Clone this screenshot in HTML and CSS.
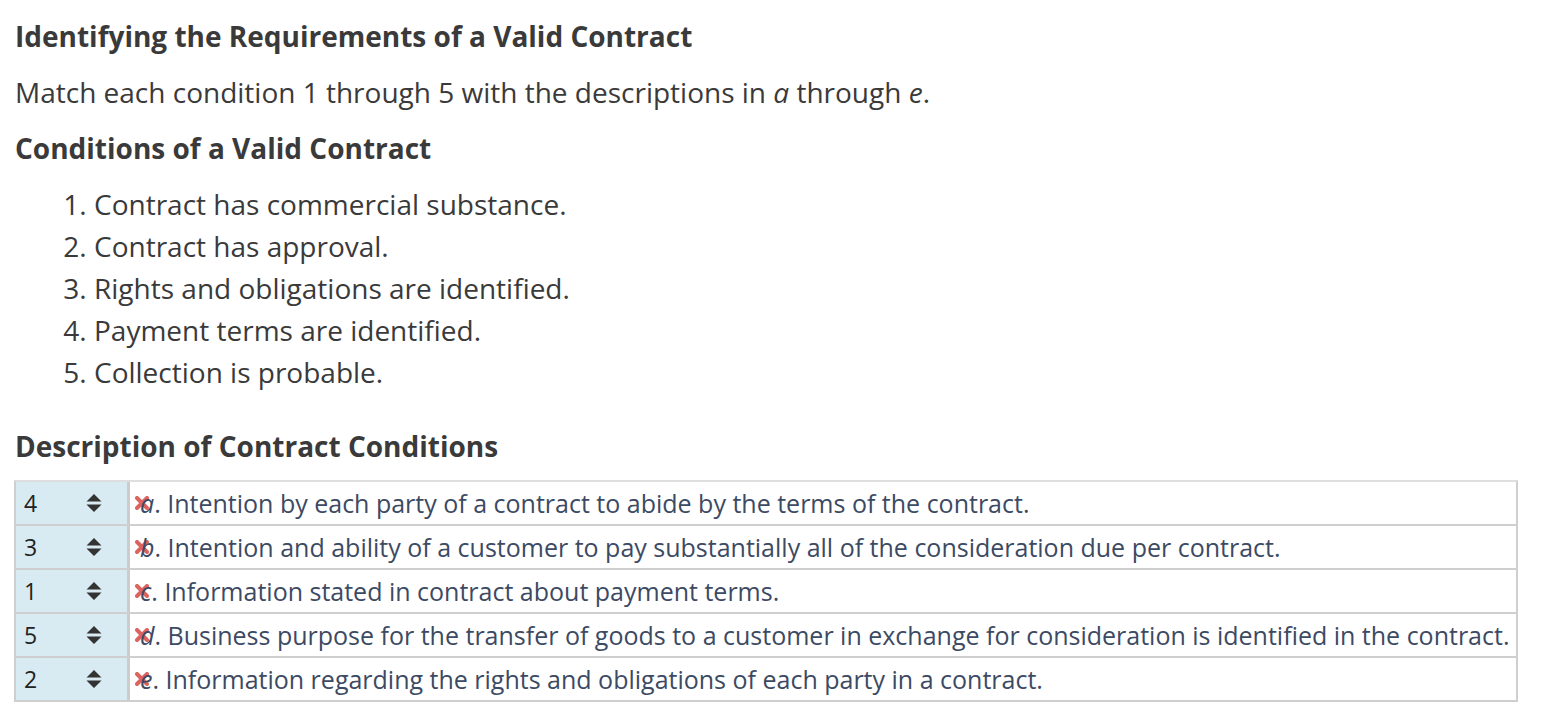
FILE: index.html
```html
<!DOCTYPE html>
<html>
<head>
<meta charset="utf-8">
<link rel="stylesheet" href="styles.css">
</head>
<body>
<div class="page">
  <h1 class="title">Identifying the Requirements of a Valid Contract</h1>
  <p class="intro">Match each condition 1 through 5 with the descriptions in <em>a</em> through <em>e</em>.</p>
  <h2 class="sub">Conditions of a Valid Contract</h2>
  <ol class="conds">
    <li>Contract has commercial substance.</li>
    <li>Contract has approval.</li>
    <li>Rights and obligations are identified.</li>
    <li>Payment terms are identified.</li>
    <li>Collection is probable.</li>
  </ol>
  <h2 class="sub sub2">Description of Contract Conditions</h2>
  <div class="match">
    <div class="row">
      <div class="sel"><span>4</span><svg class="arr" viewBox="0 0 16 18" width="16" height="18"><path d="M8 0 L15.5 7.5 H0.5 Z M8 18 L15.5 10.5 H0.5 Z" fill="#333"/></svg></div>
      <div class="desc"><svg class="mark" viewBox="0 0 14 14" width="14" height="14"><path d="M2 2 L12 12 M12 2 L2 12" stroke="#d9534f" stroke-width="4" stroke-linecap="round"/></svg><span class="txt"><em>a</em>. Intention by each party of a contract to abide by the terms of the contract.</span></div>
    </div>
    <div class="row">
      <div class="sel"><span>3</span><svg class="arr" viewBox="0 0 16 18" width="16" height="18"><path d="M8 0 L15.5 7.5 H0.5 Z M8 18 L15.5 10.5 H0.5 Z" fill="#333"/></svg></div>
      <div class="desc"><svg class="mark" viewBox="0 0 14 14" width="14" height="14"><path d="M2 2 L12 12 M12 2 L2 12" stroke="#d9534f" stroke-width="4" stroke-linecap="round"/></svg><span class="txt"><em>b</em>. Intention and ability of a customer to pay substantially all of the consideration due per contract.</span></div>
    </div>
    <div class="row">
      <div class="sel"><span>1</span><svg class="arr" viewBox="0 0 16 18" width="16" height="18"><path d="M8 0 L15.5 7.5 H0.5 Z M8 18 L15.5 10.5 H0.5 Z" fill="#333"/></svg></div>
      <div class="desc"><svg class="mark" viewBox="0 0 14 14" width="14" height="14"><path d="M2 2 L12 12 M12 2 L2 12" stroke="#d9534f" stroke-width="4" stroke-linecap="round"/></svg><span class="txt"><em>c</em>. Information stated in contract about payment terms.</span></div>
    </div>
    <div class="row">
      <div class="sel"><span>5</span><svg class="arr" viewBox="0 0 16 18" width="16" height="18"><path d="M8 0 L15.5 7.5 H0.5 Z M8 18 L15.5 10.5 H0.5 Z" fill="#333"/></svg></div>
      <div class="desc"><svg class="mark" viewBox="0 0 14 14" width="14" height="14"><path d="M2 2 L12 12 M12 2 L2 12" stroke="#d9534f" stroke-width="4" stroke-linecap="round"/></svg><span class="txt"><em>d</em>. Business purpose for the transfer of goods to a customer in exchange for consideration is identified in the contract.</span></div>
    </div>
    <div class="row">
      <div class="sel"><span>2</span><svg class="arr" viewBox="0 0 16 18" width="16" height="18"><path d="M8 0 L15.5 7.5 H0.5 Z M8 18 L15.5 10.5 H0.5 Z" fill="#333"/></svg></div>
      <div class="desc"><svg class="mark" viewBox="0 0 14 14" width="14" height="14"><path d="M2 2 L12 12 M12 2 L2 12" stroke="#d9534f" stroke-width="4" stroke-linecap="round"/></svg><span class="txt"><em>e</em>. Information regarding the rights and obligations of each party in a contract.</span></div>
    </div>
  </div>
</div>
</body>
</html>
```
FILE: styles.css
```css
html, body {
  margin: 0;
  padding: 0;
  background: #ffffff;
}
body {
  font-family: "Open Sans", "Liberation Sans", sans-serif;
  color: #3a3a3a;
}
.page {
  padding: 16px 40px 0 15px;
}
.title {
  font-size: 28px;
  font-weight: 700;
  line-height: 40px;
  margin: 0 0 16px 0;
}
.intro {
  font-size: 28px;
  font-weight: 400;
  line-height: 40px;
  margin: 0 0 16px 0;
}
.sub {
  font-size: 28px;
  font-weight: 700;
  line-height: 40px;
  margin: 0 0 15px 0;
}
.sub2 {
  margin-bottom: 14px;
}
.conds {
  margin: 0 0 33px 0;
  padding-left: 79px;
  font-size: 28px;
  line-height: 42px;
}
.match {
  width: 1504px;
  margin-left: -1px;
  border: 2px solid #cfcfcf;
  border-top-color: #dedede;
  box-sizing: border-box;
}
.row {
  display: flex;
  height: 44px;
  border-top: 2px solid #cfcfcf;
  box-sizing: border-box;
}
.row:first-child {
  border-top: none;
  height: 42px;
}
.sel {
  width: 114px;
  flex: none;
  background: #d8eaf2;
  border-right: 3px solid #cccccc;
  display: flex;
  align-items: center;
  justify-content: space-between;
  padding: 0 25px 0 8px;
  box-sizing: border-box;
  font-size: 23px;
  color: #222;
}
.arr {
  display: block;
}
.desc {
  position: relative;
  flex: 1;
  display: flex;
  align-items: center;
  padding-left: 10px;
  font-size: 25px;
  color: #3c4a63;
  white-space: nowrap;
}
.txt {
  position: relative;
}
.desc em {
  font-style: italic;
}
.mark {
  position: absolute;
  left: 5px;
  top: 50%;
  transform: translateY(-50%);
  opacity: 0.9;
}
```
